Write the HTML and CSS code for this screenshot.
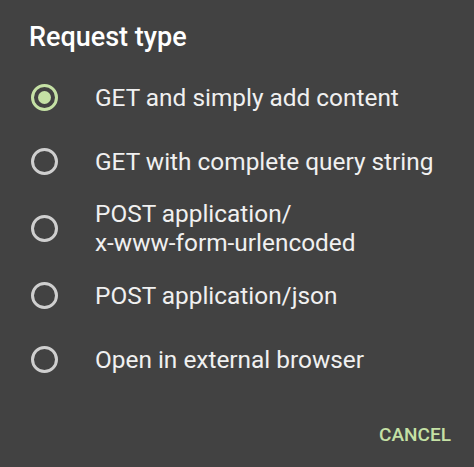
FILE: index.html
```html
<!DOCTYPE html>
<html>
<head>
<meta charset="utf-8">
<link rel="stylesheet" href="styles.css">
</head>
<body>
<div class="dialog">
  <h1 class="title">Request type</h1>
  <ul class="options">
    <li class="option selected"><span class="radio"></span><span class="label">GET and simply add content</span></li>
    <li class="option"><span class="radio"></span><span class="label">GET with complete query string</span></li>
    <li class="option"><span class="radio"></span><span class="label">POST application/<br>x-www-form-urlencoded</span></li>
    <li class="option"><span class="radio"></span><span class="label">POST application/json</span></li>
    <li class="option"><span class="radio"></span><span class="label">Open in external browser</span></li>
  </ul>
  <div class="actions"><span class="button">CANCEL</span></div>
</div>
</body>
</html>
```

FILE: styles.css
```css
html, body {
  margin: 0;
  padding: 0;
  background: #424242;
}
body {
  width: 474px;
  height: 467px;
  overflow: hidden;
  font-family: Roboto, "Noto Sans", sans-serif;
}
.dialog {
  display: flex;
  flex-direction: column;
  padding-top: 21px;
}
.title {
  margin: 0 0 12px 29px;
  font-size: 27px;
  line-height: 32px;
  font-weight: 500;
  color: #ffffff;
}
.options {
  list-style: none;
  margin: 0;
  padding: 0;
}
.option {
  display: flex;
  align-items: center;
  min-height: 64px;
  padding: 6px 0;
  box-sizing: border-box;
}
.radio {
  flex: none;
  box-sizing: border-box;
  width: 27px;
  height: 27px;
  margin-left: 31px;
  margin-right: 37px;
  border: 3px solid #cfcfcf;
  border-radius: 50%;
  display: flex;
  align-items: center;
  justify-content: center;
}
.selected .radio {
  border-color: #c5e1a5;
}
.selected .radio::after {
  content: "";
  width: 13px;
  height: 13px;
  border-radius: 50%;
  background: #c5e1a5;
}
.label {
  font-size: 24.4px;
  line-height: 29px;
  color: #f0f0f0;
}
.actions {
  display: flex;
  justify-content: flex-end;
  margin-top: 32px;
  padding-right: 23px;
}
.button {
  font-size: 19px;
  line-height: 24px;
  font-weight: 500;
  color: #c5e1a5;
}
```
